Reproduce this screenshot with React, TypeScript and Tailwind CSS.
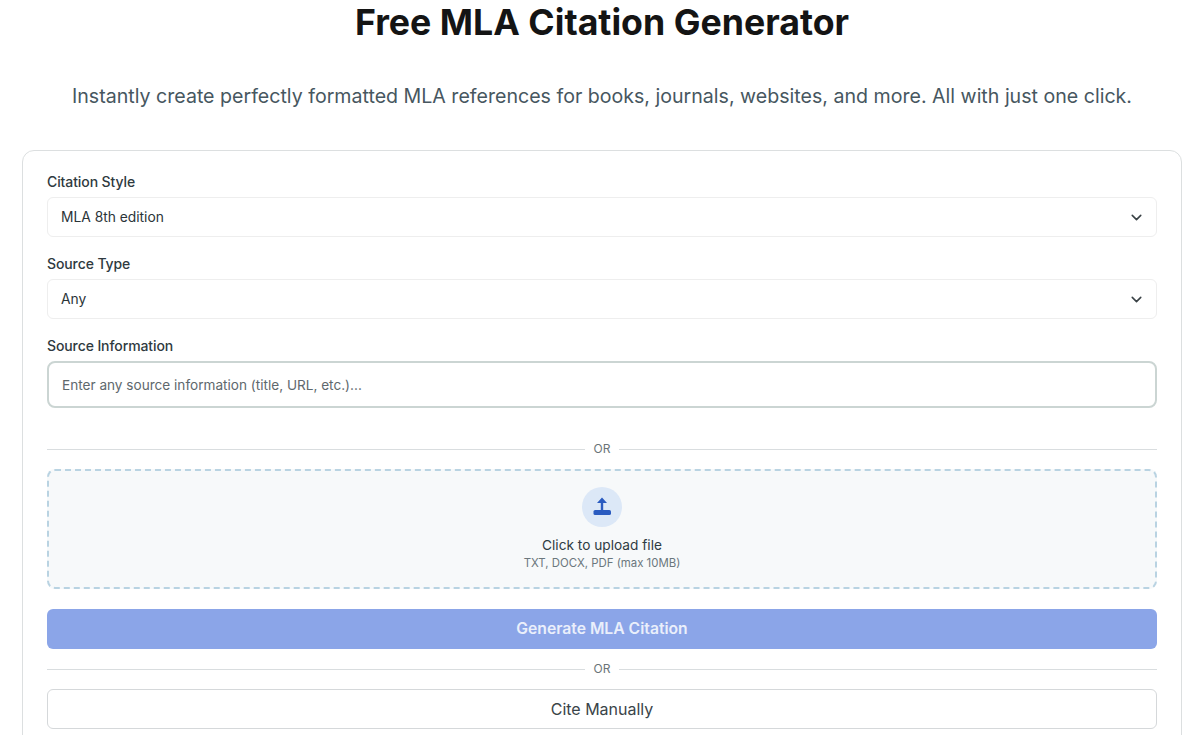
import { ChevronDown } from "lucide-react";

const font = "font-['Inter','Noto_Sans',sans-serif]";

const Divider = () => (
  <div className="flex items-center gap-[9px] h-[20px]">
    <div className="flex-1 h-px bg-[#d9dddf]" />
    <span className="text-[12px] leading-none text-[#6b7478]">OR</span>
    <div className="flex-1 h-px bg-[#d9dddf]" />
  </div>
);

const SelectBox = ({ label, value }: { label: string; value: string }) => (
  <div>
    <div className="text-[14px] leading-[20px] font-medium text-[#2f3a40] mb-[5px] tracking-[-0.1px]">
      {label}
    </div>
    <div className="flex items-center justify-between h-10 pl-[13px] pr-[11px] rounded-md border border-[#eeeeee] text-[13.8px] text-[#2b3438]">
      <span>{value}</span>
      <ChevronDown className="w-[17px] h-[17px] text-[#3a4246]" strokeWidth={2.2} />
    </div>
  </div>
);

export default function App() {
  return (
    <div className={`${font} h-[735px] overflow-hidden bg-white pl-[22px] pr-[17px]`}>
      <h1 className="text-center text-[35.7px] leading-[44px] font-bold text-[#141414]">
        Free MLA Citation Generator
      </h1>
      <p className="mt-[38px] text-center text-[19.6px] leading-[28px] text-[#47575f]">
        Instantly create perfectly formatted MLA references for books, journals, websites, and more. All with just one click.
      </p>
      <div className="mt-[40px] rounded-xl border border-[#dcdfe0] px-6 pt-[21px] pb-6">
        <div className="flex flex-col gap-[17px]">
          <SelectBox label="Citation Style" value="MLA 8th edition" />
          <SelectBox label="Source Type" value="Any" />
        </div>
        <div className="mt-[17px] text-[14px] leading-[20px] font-medium text-[#2f3a40] mb-[5px] tracking-[-0.1px]">
          Source Information
        </div>
        <div className="flex items-center h-[47px] pt-[2px] px-[13px] rounded-lg border-2 border-[#cbd5d3] text-[13.6px] text-[#5e686d]">
          Enter any source information (title, URL, etc.)...
        </div>
        <div className="mt-[31px]">
          <Divider />
        </div>
        <div className="mt-[10px] flex flex-col items-center h-[120px] pt-[16px] rounded-lg border-2 border-dashed border-[#b9d3e2] bg-[#f7f9fa]">
          <div className="flex items-center justify-center w-10 h-10 rounded-full bg-[#dce8f7]">
            <svg viewBox="0 0 20 20" className="w-5 h-5" fill="#2a5bc0">
              <path d="M10 .5 5 6h3.8v7h2.4V6H15z" />
              <rect x="1.5" y="13" width="17.5" height="5" rx="1.6" />
            </svg>
          </div>
          <div className="mt-[8px] text-[13.7px] leading-[20px] font-normal text-[#2f3c43]">
            Click to upload file
          </div>
          <div className="mt-px text-[11.4px] leading-[14px] text-[#6b777d]">
            TXT, DOCX, PDF (max 10MB)
          </div>
        </div>
        <button className="mt-[20px] flex items-center justify-center w-full h-10 rounded-md bg-[#8ba5e8] text-[15.7px] font-semibold text-[#eaeffb]">
          Generate MLA Citation
        </button>
        <div className="mt-[10px]">
          <Divider />
        </div>
        <button className="mt-[10px] flex items-center justify-center w-full h-10 rounded-md border border-[#d5d8da] text-[16px] font-normal text-[#3a4449]">
          Cite Manually
        </button>
      </div>
    </div>
  );
}
